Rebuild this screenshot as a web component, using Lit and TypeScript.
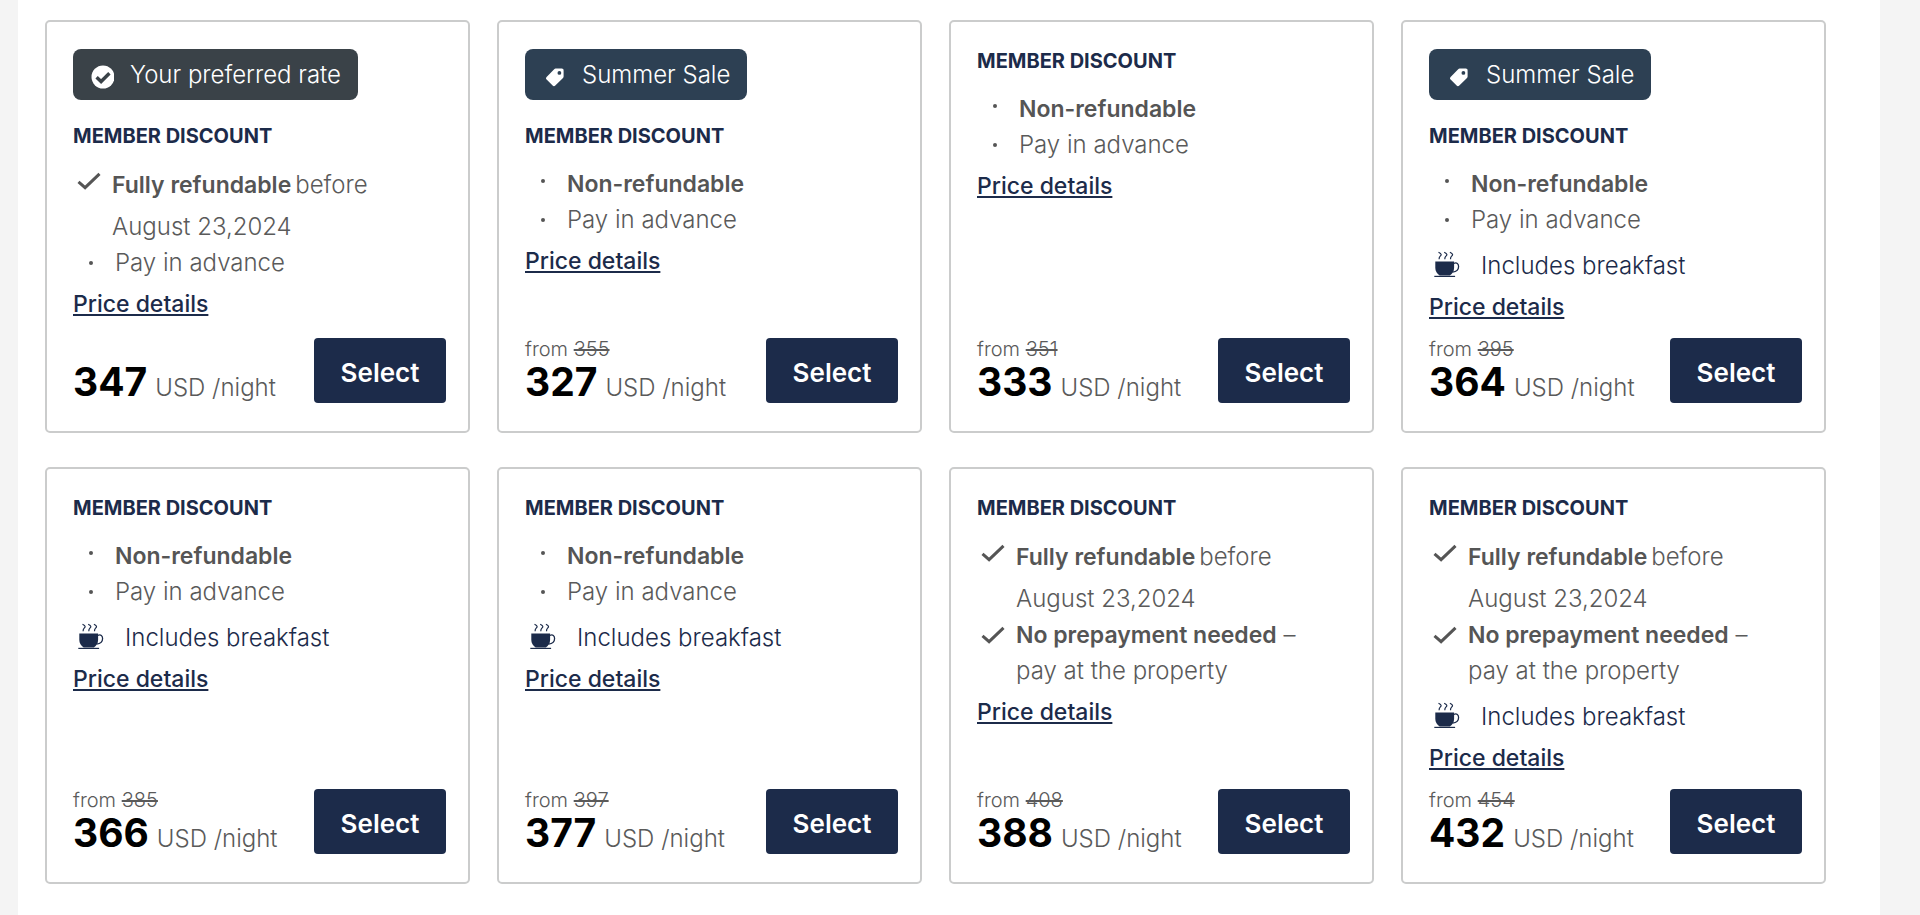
import { LitElement, html, css, svg, nothing } from "lit";
import { customElement, property } from "lit/decorators.js";

type Badge = "preferred" | "sale";
type Perk = "refundable" | "nonrefundable" | "advance" | "property";

interface Rate {
  badge?: Badge;
  perks: Perk[];
  breakfast?: boolean;
  was?: number;
  price: number;
}

const RATES: Rate[] = [
  { badge: "preferred", perks: ["refundable", "advance"], price: 347 },
  { badge: "sale", perks: ["nonrefundable", "advance"], was: 355, price: 327 },
  { perks: ["nonrefundable", "advance"], was: 351, price: 333 },
  { badge: "sale", perks: ["nonrefundable", "advance"], breakfast: true, was: 395, price: 364 },
  { perks: ["nonrefundable", "advance"], breakfast: true, was: 385, price: 366 },
  { perks: ["nonrefundable", "advance"], breakfast: true, was: 397, price: 377 },
  { perks: ["refundable", "property"], was: 408, price: 388 },
  { perks: ["refundable", "property"], breakfast: true, was: 454, price: 432 },
];

const checkCircle = svg`<svg class="badge-icon" viewBox="0 0 24 24" aria-hidden="true">
  <circle cx="13" cy="12" r="11.5" fill="#fff"/>
  <path d="M6.600 12.200l4.500 4.300 8.300-8.300" fill="none" stroke="#3a4248" stroke-width="3.400"/>
</svg>`;

const tag = svg`<svg class="badge-icon" viewBox="0 0 24 24" aria-hidden="true">
  <path fill-rule="evenodd" fill="#fff" d="M13.600 3.600h6.200c1.100 0 1.800.7 1.800 1.800v6c0 .6-.2 1.100-.6 1.500l-7.700 7.700c-.8.8-1.900.8-2.700 0l-6-6c-.8-.8-.8-1.900 0-2.700l7.600-7.700c.4-.4.9-.6 1.400-.6zM17.400 6a1.900 1.900 0 1 0 0 3.800 1.900 1.900 0 0 0 0-3.800z"/>
</svg>`;

const check = svg`<svg class="check" viewBox="0 0 24 18" aria-hidden="true">
  <path d="M1.500 9.800l6.600 5.900L22.500 1.800" fill="none" stroke="#555" stroke-width="3"/>
</svg>`;

const cup = svg`<svg class="cup" viewBox="0 0 26 27" aria-hidden="true">
  <path d="M1.300 10.500h18.800v6.200c0 3.600-1.700 6-4.200 7.800H5.700c-2.700-1.800-4.400-4.200-4.400-7.800z" fill="#1c2b4a"/>
  <g fill="none" stroke="#1c2b4a">
    <path d="M20 12.300c2.800-1 4.600.3 4.600 3.200 0 3.100-2.400 5.200-6 5.600" stroke-width="1.300"/>
    <path d="M.3 25.400h20.800" stroke-width="1.200"/>
    <path d="M4.500 1.300c3.300 1.500 3.200 2.700 1.500 4.100-.8.700-.9 1.500-.9 2.900M10.200 1.300c3.300 1.500 3.200 2.700 1.500 4.100-.8.700-.9 1.500-.9 2.900M15.900 1.300c3.300 1.500 3.200 2.700 1.500 4.100-.8.700-.9 1.500-.9 2.900" stroke-width="1.200"/>
  </g>
</svg>`;

@customElement("rate-card")
class RateCard extends LitElement {
  @property({ attribute: false }) rate!: Rate;

  static styles = css`
    :host {
      display: flex;
      flex-direction: column;
      box-sizing: border-box;
      padding: 27px 22px 28px 26px;
      border: 2px solid #cbcccc;
      border-radius: 5px;
      background: #fff;
      color: #5a5a5a;
      font-size: 24px;
      line-height: 36px;
      font-weight: 300;
    }
    .badge {
      align-self: flex-start;
      display: flex;
      align-items: center;
      gap: 16px;
      height: 51px;
      margin-bottom: 24px;
      padding: 0 17px;
      border-radius: 8px;
      color: #fff;
      white-space: nowrap;
    }
    .preferred { background: #3a4248; }
    .sale { background: #2d4053; }
    .badge-icon { width: 24px; height: 24px; margin-top: 4px; flex: none; }
    .title {
      margin: 0 0 19px;
      color: #1c2b4a;
      font-size: 20px;
      line-height: 24px;
      font-weight: 700;
    }
    .perks { list-style: none; margin: 0; padding: 0; }
    .perk { display: flex; align-items: flex-start; }
    .bullet { line-height: 35px; }
    .marker {
      display: flex;
      align-items: center;
      justify-content: center;
      flex: none;
      box-sizing: border-box;
      width: 39px;
      height: 36px;
      padding-right: 7px;
    }
    .perk:first-child .marker { height: 28px; }
    .bullet .marker { width: 42px; }
    .dot { width: 4px; height: 4px; border-radius: 50%; background: #555; }
    .check { width: 24px; height: 18px; flex: none; }
    .line { display: block; height: 36px; }
    .date { margin-top: 5px; height: 37px; line-height: 37px; }
    .before { margin-left: 4px; }
    b { font-size: 23px; font-weight: 600; color: #555; }
    .breakfast {
      display: flex;
      align-items: center;
      gap: 21px;
      margin: 10px 0 0;
      padding-left: 5px;
      color: #1c2b4a;
    }
    .cup { width: 26px; height: 27px; margin-bottom: 4px; flex: none; }
    .details {
      align-self: flex-start;
      color: #1c2b4a;
      font-size: 23px;
      font-weight: 500;
      line-height: 46px;
      text-decoration-thickness: 2px;
      text-underline-offset: 2px;
    }
    .footer {
      display: flex;
      align-items: flex-end;
      justify-content: space-between;
      margin-top: auto;
      padding-top: 8px;
    }
    .was { display: block; font-size: 20px; line-height: 23px; }
    .now {
      display: block;
      color: #000;
      font-size: 39px;
      font-weight: 700;
      line-height: 42px;
      white-space: nowrap;
    }
    .unit {
      margin-left: 8px;
      color: #5a5a5a;
      font-size: 24px;
      font-weight: 300;
      line-height: 24px;
    }
    .select {
      width: 132px;
      height: 65px;
      padding: 4px 0 0;
      border: 0;
      border-radius: 4px;
      background: #1c2b4a;
      color: #fff;
      font: inherit;
      font-size: 26px;
      font-weight: 600;
      cursor: pointer;
    }
  `;

  private renderBadge(badge: Badge) {
    return badge === "preferred"
      ? html`<div class="badge preferred">${checkCircle}<span>Your preferred rate</span></div>`
      : html`<div class="badge sale">${tag}<span>Summer Sale</span></div>`;
  }

  private renderPerk(perk: Perk) {
    const dot = html`<span class="marker"><span class="dot"></span></span>`;
    const tick = html`<span class="marker">${check}</span>`;
    switch (perk) {
      case "refundable":
        return html`<li class="perk">${tick}<div><span class="line"><b>Fully refundable</b><span class="before">before</span></span><span class="line date">August 23,2024</span></div></li>`;
      case "nonrefundable":
        return html`<li class="perk bullet">${dot}<b>Non-refundable</b></li>`;
      case "advance":
        return html`<li class="perk bullet">${dot}<span>Pay in advance</span></li>`;
      case "property":
        return html`<li class="perk">${tick}<div><span class="line"><b>No prepayment needed</b> –</span><span class="line">pay at the property</span></div></li>`;
    }
  }

  render() {
    const r = this.rate;
    return html`
      ${r.badge ? this.renderBadge(r.badge) : nothing}
      <h3 class="title">MEMBER DISCOUNT</h3>
      <ul class="perks">${r.perks.map((p) => this.renderPerk(p))}</ul>
      ${r.breakfast ? html`<p class="breakfast">${cup}<span>Includes breakfast</span></p>` : nothing}
      <a class="details" href="#">Price details</a>
      <div class="footer">
        <div>
          ${r.was ? html`<span class="was">from <s>${r.was}</s></span>` : nothing}
          <span class="now">${r.price}<span class="unit">USD /night</span></span>
        </div>
        <button class="select" type="button">Select</button>
      </div>
    `;
  }
}

@customElement("app-root")
class AppRoot extends LitElement {
  static styles = css`
    :host {
      display: flex;
      box-sizing: border-box;
      min-height: 100vh;
      padding: 0 40px 0 18px;
      background: #f4f4f4;
      font-family: Inter, "Liberation Sans", sans-serif;
    }
    .panel {
      flex: 1;
      display: grid;
      grid-template-columns: repeat(auto-fit, minmax(400px, 1fr));
      align-content: start;
      gap: 34px 27px;
      padding: 20px 54px 31px 27px;
      background: #fff;
    }
  `;

  render() {
    return html`<main class="panel">
      ${RATES.map((rate) => html`<rate-card .rate=${rate}></rate-card>`)}
    </main>`;
  }
}
